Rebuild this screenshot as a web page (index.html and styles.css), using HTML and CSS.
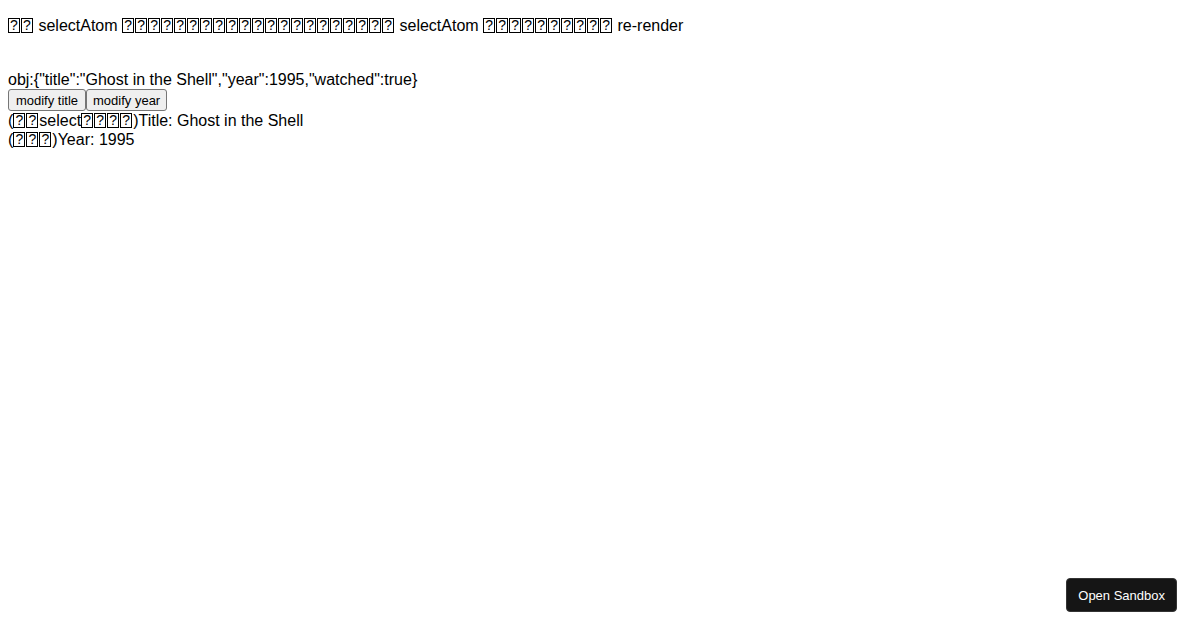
FILE: index.html
```html
<!DOCTYPE html>
<html lang="en">

<head>
    <meta charset="UTF-8">
    <meta name="viewport" content="width=device-width, initial-scale=1.0">
    <title>selectAtom</title>
    <link rel="stylesheet" href="styles.css">
</head>

<body>
    <p class="intro"><i>?</i><i>?</i> selectAtom <i>?</i><i>?</i><i>?</i><i>?</i><i>?</i><i>?</i><i>?</i><i>?</i><i>?</i><i>?</i><i>?</i><i>?</i><i>?</i><i>?</i><i>?</i><i>?</i><i>?</i><i>?</i><i>?</i><i>?</i><i>?</i> selectAtom <i>?</i><i>?</i><i>?</i><i>?</i><i>?</i><i>?</i><i>?</i><i>?</i><i>?</i><i>?</i> re-render</p>
    <br>
    <div>obj:{"title":"Ghost in the Shell","year":1995,"watched":true}</div>
    <div class="actions">
        <button type="button">modify title</button>
        <button type="button">modify year</button>
    </div>
    <div>(<i>?</i><i>?</i>select<i>?</i><i>?</i><i>?</i><i>?</i>)Title: Ghost in the Shell</div>
    <div>(<i>?</i><i>?</i><i>?</i>)Year: 1995</div>

    <button type="button" class="open-sandbox">Open Sandbox</button>
</body>

</html>
```

FILE: styles.css
```css
body {
    margin: 0 8px;
    background: #fff;
    color: #000;
    font-family: "Liberation Sans", Arial, sans-serif;
    font-size: 16px;
    line-height: 19px;
}

.intro {
    margin: 16px 0;
}

/* boxed question mark */
i {
    display: inline-block;
    box-sizing: border-box;
    width: 12px;
    height: 15px;
    margin-right: 1px;
    border: 1px solid #000;
    font-size: 14px;
    font-style: normal;
    line-height: 13px;
    text-align: center;
    vertical-align: 1px;
}

.actions {
    display: flex;
}

.actions button {
    min-width: 78px;
    height: 22px;
    padding: 1px 6px;
    border: 1px solid #767676;
    border-radius: 3px;
    background: #efefef;
    color: #000;
    font-family: inherit;
    font-size: 13px;
}

.open-sandbox {
    position: fixed;
    right: 23px;
    bottom: 18px;
    height: 34px;
    padding: 0 11px;
    border: 1px solid #343434;
    border-radius: 4px;
    background: #151515;
    color: #fff;
    font-family: inherit;
    font-size: 13px;
    cursor: pointer;
}
```
